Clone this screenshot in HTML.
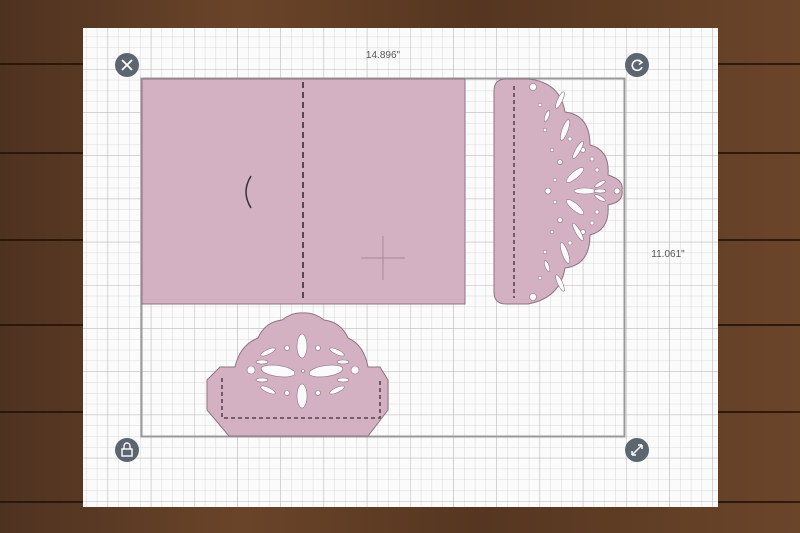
<!DOCTYPE html>
<html><head><meta charset="utf-8"><style>
html,body{margin:0;padding:0;width:800px;height:533px;overflow:hidden;font-family:"Liberation Sans",sans-serif}
</style></head><body>
<svg width="800" height="533" viewBox="0 0 800 533" xmlns="http://www.w3.org/2000/svg">
<defs>
<linearGradient id="wood" x1="0" y1="0" x2="1" y2="0">
<stop offset="0" stop-color="#4e3220"/><stop offset="0.3" stop-color="#6a4429"/><stop offset="0.6" stop-color="#553620"/><stop offset="1" stop-color="#6b452a"/>
</linearGradient>
<pattern id="minor" x="21.2" y="25.8" width="10.8" height="10.8" patternUnits="userSpaceOnUse">
<path d="M0 0H10.8M0 0V10.8" stroke="#d0d0d0" stroke-width="0.8" fill="none"/>
</pattern>
<pattern id="major" x="21.2" y="25.8" width="43.2" height="43.2" patternUnits="userSpaceOnUse">
<path d="M0 0H43.2M0 0V43.2" stroke="#b8b8b8" stroke-width="1" fill="none"/>
</pattern>
</defs>
<rect width="800" height="533" fill="url(#wood)"/>
<g stroke="#24140a" stroke-width="2" opacity="0.85">
<line x1="0" y1="64" x2="800" y2="64"/><line x1="0" y1="153" x2="800" y2="153"/><line x1="0" y1="240" x2="800" y2="240"/><line x1="0" y1="325" x2="800" y2="325"/><line x1="0" y1="412" x2="800" y2="412"/><line x1="0" y1="502" x2="800" y2="502"/>
</g>
<rect x="83" y="28" width="635" height="479" fill="#fbfbfb"/>
<rect x="83" y="28" width="635" height="479" fill="url(#minor)"/>
<rect x="83" y="28" width="635" height="479" fill="url(#major)"/>
<rect x="141.5" y="78.5" width="483" height="358" fill="none" stroke="#9a9a9a" stroke-width="2"/>
<rect x="142" y="79" width="323" height="225" fill="#d3b1c2" stroke="#8f7482" stroke-width="1"/>
<line x1="303" y1="82" x2="303" y2="300" stroke="#5a4450" stroke-width="2" stroke-dasharray="6,4"/>
<path d="M251 176 Q241 192 251 208" fill="none" stroke="#333" stroke-width="1.5"/>
<path d="M383 236V280M361 258H405" stroke="#a88898" stroke-width="1"/>
<path d="M506 79 H528 Q560 82 565 112 Q590 115 590 145 Q610 150 608 175 Q624 180 622 190 Q624 202 608 205 Q610 230 590 235 Q590 265 565 268 Q560 298 528 304 H506 Q494 304 494 292 V91 Q494 79 506 79Z" fill="#d3b1c2" stroke="#8f7482" stroke-width="1"/>
<line x1="514" y1="86" x2="514" y2="298" stroke="#5a4450" stroke-width="1.6" stroke-dasharray="4,3"/>
<g fill="#fbfbfb" stroke="#8f7482" stroke-width="0.6">
<circle cx="533" cy="87" r="3.5"/><circle cx="533" cy="297" r="3.5"/><circle cx="617" cy="191" r="3"/>
<circle cx="548" cy="191" r="3"/><circle cx="560" cy="162" r="2.5"/><circle cx="560" cy="220" r="2.5"/><circle cx="583" cy="150" r="2.5"/><circle cx="583" cy="232" r="2.5"/><circle cx="540" cy="105" r="1.8"/><circle cx="540" cy="278" r="1.8"/><circle cx="545" cy="130" r="1.8"/><circle cx="545" cy="252" r="1.8"/><circle cx="597" cy="170" r="2"/><circle cx="597" cy="212" r="2"/>
<circle cx="552" cy="150" r="1.8"/><circle cx="552" cy="232" r="1.8"/><circle cx="555" cy="180" r="1.8"/><circle cx="555" cy="202" r="1.8"/><circle cx="570" cy="243" r="2"/><circle cx="570" cy="139" r="2"/><circle cx="592" cy="223" r="2"/><circle cx="592" cy="159" r="2"/>
<ellipse cx="560" cy="100" rx="2.5" ry="9" transform="rotate(25 560 100)"/><ellipse cx="560" cy="283" rx="2.5" ry="9" transform="rotate(-25 560 283)"/>
<ellipse cx="565" cy="130" rx="3" ry="11" transform="rotate(20 565 130)"/><ellipse cx="565" cy="253" rx="3" ry="11" transform="rotate(-20 565 253)"/>
<ellipse cx="575" cy="175" rx="3.5" ry="11" transform="rotate(50 575 175)"/><ellipse cx="575" cy="207" rx="3.5" ry="11" transform="rotate(-50 575 207)"/>
<ellipse cx="585" cy="191" rx="11" ry="3"/><ellipse cx="600" cy="191" rx="6" ry="2"/>
<ellipse cx="600" cy="184" rx="2" ry="6" transform="rotate(60 600 184)"/><ellipse cx="600" cy="198" rx="2" ry="6" transform="rotate(-60 600 198)"/>
<ellipse cx="578" cy="150" rx="2.5" ry="10" transform="rotate(30 578 150)"/><ellipse cx="578" cy="232" rx="2.5" ry="10" transform="rotate(-30 578 232)"/>
<ellipse cx="547" cy="116" rx="2" ry="6" transform="rotate(20 547 116)"/><ellipse cx="547" cy="266" rx="2" ry="6" transform="rotate(-20 547 266)"/>
</g>
<path d="M229 436 L207 410 V380 L220 367 H235 Q240 345 258 338 Q265 322 282 320 Q292 312 303 313 Q314 312 324 320 Q341 322 348 338 Q364 345 368 367 H380 L388 380 V410 L368 436Z" fill="#d3b1c2" stroke="#8f7482" stroke-width="1"/>
<path d="M222 378 V418 H380 V378" fill="none" stroke="#5a4450" stroke-width="1.6" stroke-dasharray="4,3"/>
<g fill="#fbfbfb" stroke="#8f7482" stroke-width="0.6">
<ellipse cx="302" cy="346" rx="5" ry="12"/><ellipse cx="302" cy="396" rx="5" ry="12"/>
<ellipse cx="278" cy="371" rx="17" ry="5.5" transform="rotate(8 278 371)"/><ellipse cx="326" cy="371" rx="17" ry="5.5" transform="rotate(-8 326 371)"/>
<circle cx="251" cy="370" r="4"/><circle cx="355" cy="370" r="4"/><circle cx="303" cy="371" r="1.5"/>
<circle cx="287" cy="348" r="2.5"/><circle cx="318" cy="348" r="2.5"/><circle cx="287" cy="393" r="2.5"/><circle cx="318" cy="393" r="2.5"/>
<ellipse cx="268" cy="352" rx="8" ry="2.5" transform="rotate(-25 268 352)"/><ellipse cx="337" cy="352" rx="8" ry="2.5" transform="rotate(25 337 352)"/>
<ellipse cx="268" cy="390" rx="8" ry="2.5" transform="rotate(25 268 390)"/><ellipse cx="337" cy="390" rx="8" ry="2.5" transform="rotate(-25 337 390)"/>
<ellipse cx="262" cy="362" rx="6" ry="2" /><ellipse cx="343" cy="362" rx="6" ry="2"/><ellipse cx="262" cy="380" rx="6" ry="2"/><ellipse cx="343" cy="380" rx="6" ry="2"/>
</g>
<g>
<circle cx="127" cy="65" r="12" fill="#5c6670"/>
<path d="M122 60 L132 70 M132 60 L122 70" stroke="#fff" stroke-width="1.8"/>
<circle cx="637" cy="65" r="12" fill="#5c6670"/>
<path d="M641 62 A5 5 0 1 0 642 67" fill="none" stroke="#fff" stroke-width="1.6"/>
<path d="M639 60 L642 62.5 L639 64.5" fill="none" stroke="#fff" stroke-width="1.4"/>
<circle cx="127" cy="450" r="12" fill="#5c6670"/>
<rect x="122" y="449" width="10" height="7" fill="none" stroke="#fff" stroke-width="1.4"/>
<path d="M124 449 V446 A3 3 0 0 1 130 446 V449" fill="none" stroke="#fff" stroke-width="1.4"/>
<circle cx="637" cy="450" r="12" fill="#5c6670"/>
<path d="M632 455 L642 445 M632 455 V451 M632 455 H636 M642 445 H638 M642 445 V449" stroke="#fff" stroke-width="1.5" fill="none"/>
</g>
<text x="383" y="58" font-size="10" fill="#555" text-anchor="middle" font-family="Liberation Sans, sans-serif">14.896"</text>
<text x="668" y="257" font-size="10" fill="#555" text-anchor="middle" font-family="Liberation Sans, sans-serif">11.061"</text>
</svg>
</body></html>
